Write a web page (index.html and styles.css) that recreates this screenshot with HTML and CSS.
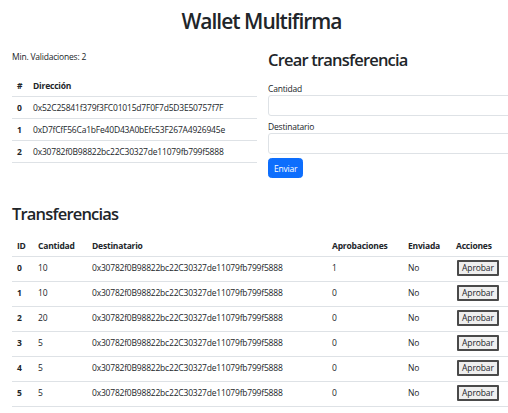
FILE: index.html
```html
<!DOCTYPE html>
<html lang="es">
<head>
<meta charset="utf-8">
<title>Wallet Multifirma</title>
<link rel="stylesheet" href="styles.css">
</head>
<body>
<div class="page">
  <h1 class="title">Wallet Multifirma</h1>
  <div class="row">
    <div class="col">
      <p class="minval">Min. Validaciones: 2</p>
      <table class="tbl owners">
        <thead>
          <tr><th class="c-num">#</th><th>Dirección</th></tr>
        </thead>
        <tbody>
          <tr><th class="c-num">0</th><td>0x52C25841f379f3FC01015d7F0F7d5D3E50757f7F</td></tr>
          <tr><th class="c-num">1</th><td>0xD7fCfF56Ca1bFe40D43A0bEfc53F267A4926945e</td></tr>
          <tr><th class="c-num">2</th><td>0x30782f0B98822bc22C30327de11079fb799f5888</td></tr>
        </tbody>
      </table>
    </div>
    <div class="col">
      <h2 class="subtitle">Crear transferencia</h2>
      <form class="form">
        <label class="label" for="cantidad">Cantidad</label>
        <input class="input" id="cantidad" type="text">
        <label class="label label-next" for="dest">Destinatario</label>
        <input class="input" id="dest" type="text">
        <button class="btn-primary" type="button">Enviar</button>
      </form>
    </div>
  </div>

  <h2 class="subtitle section">Transferencias</h2>
  <table class="tbl transfers">
    <colgroup>
      <col class="w-id"><col class="w-cant"><col class="w-dest"><col class="w-apr"><col class="w-env"><col class="w-acc">
    </colgroup>
    <thead>
      <tr><th>ID</th><th>Cantidad</th><th>Destinatario</th><th>Aprobaciones</th><th>Enviada</th><th>Acciones</th></tr>
    </thead>
    <tbody>
      <tr><th>0</th><td>10</td><td>0x30782f0B98822bc22C30327de11079fb799f5888</td><td>1</td><td>No</td><td><button class="btn-plain" type="button">Aprobar</button></td></tr>
      <tr><th>1</th><td>10</td><td>0x30782f0B98822bc22C30327de11079fb799f5888</td><td>0</td><td>No</td><td><button class="btn-plain" type="button">Aprobar</button></td></tr>
      <tr><th>2</th><td>20</td><td>0x30782f0B98822bc22C30327de11079fb799f5888</td><td>0</td><td>No</td><td><button class="btn-plain" type="button">Aprobar</button></td></tr>
      <tr><th>3</th><td>5</td><td>0x30782f0B98822bc22C30327de11079fb799f5888</td><td>0</td><td>No</td><td><button class="btn-plain" type="button">Aprobar</button></td></tr>
      <tr><th>4</th><td>5</td><td>0x30782f0B98822bc22C30327de11079fb799f5888</td><td>0</td><td>No</td><td><button class="btn-plain" type="button">Aprobar</button></td></tr>
      <tr><th>5</th><td>5</td><td>0x30782f0B98822bc22C30327de11079fb799f5888</td><td>0</td><td>No</td><td><button class="btn-plain" type="button">Aprobar</button></td></tr>
    </tbody>
  </table>
</div>
</body>
</html>
```

FILE: styles.css
```css
html, body {
  margin: 0;
  padding: 0;
  overflow: hidden;
  background: #fff;
}
body {
  font-family: "Open Sans", "Noto Sans", sans-serif;
  font-size: 8.5px;
  line-height: 13px;
  letter-spacing: -0.2px;
  color: #212529;
}
.page {
  width: 523px;
  box-sizing: border-box;
  padding: 8px 12px 0;
}
.title {
  margin: 0;
  font-size: 21px;
  line-height: 26px;
  font-weight: 600;
  letter-spacing: -1px;
  text-align: center;
}
.row {
  display: grid;
  grid-template-columns: 245px 243px;
  column-gap: 11px;
  margin-top: 16px;
}
.minval {
  margin: 0 0 12px;
}
.subtitle {
  margin: 0;
  font-size: 16.5px;
  line-height: 20px;
  font-weight: 600;
  letter-spacing: -0.8px;
}
.tbl {
  width: 100%;
  border-collapse: collapse;
}
.tbl th, .tbl td {
  text-align: left;
  vertical-align: top;
  padding: 4px 5px;
  border-bottom: 1px solid #dee2e6;
  white-space: nowrap;
}
.tbl th { font-weight: 700; }
.tbl td { font-weight: 400; }
.owners .c-num { width: 6px; }
.form {
  display: flex;
  flex-direction: column;
  align-items: flex-start;
  margin-top: 12px;
}
.label {
  display: block;
  line-height: 13px;
}
.label-next { margin-top: 4px; }
.input {
  display: block;
  box-sizing: border-box;
  width: 100%;
  height: 21px;
  margin: 0;
  border: 1px solid #dee2e6;
  border-radius: 3px;
  background: #fff;
  font: inherit;
}
.btn-primary {
  margin-top: 4px;
  height: 20px;
  padding: 0 5px;
  border: 1px solid #0d6efd;
  border-radius: 3.5px;
  background: #0d6efd;
  color: #fff;
  font-family: inherit;
  font-size: 8.5px;
  line-height: 13px;
  letter-spacing: -0.2px;
}
.section {
  margin-top: 26px;
  margin-bottom: 11px;
}
.transfers { table-layout: fixed; width: 499px; }
.w-id { width: 21px; }
.w-cant { width: 54px; }
.w-dest { width: 240px; }
.w-apr { width: 76px; }
.w-env { width: 48px; }
.w-acc { width: 60px; }
.transfers tbody td, .transfers tbody th { padding-top: 4px; padding-bottom: 4px; height: 16px; }
.btn-plain {
  display: block;
  box-sizing: border-box;
  height: 16px;
  margin: -1px 0 0 1px;
  padding: 0 3px;
  border: 2px solid #4a4a4a;
  border-radius: 1px;
  background: #efefef;
  color: #212529;
  font-family: inherit;
  font-size: 8.5px;
  line-height: 12px;
  letter-spacing: -0.1px;
}
```
